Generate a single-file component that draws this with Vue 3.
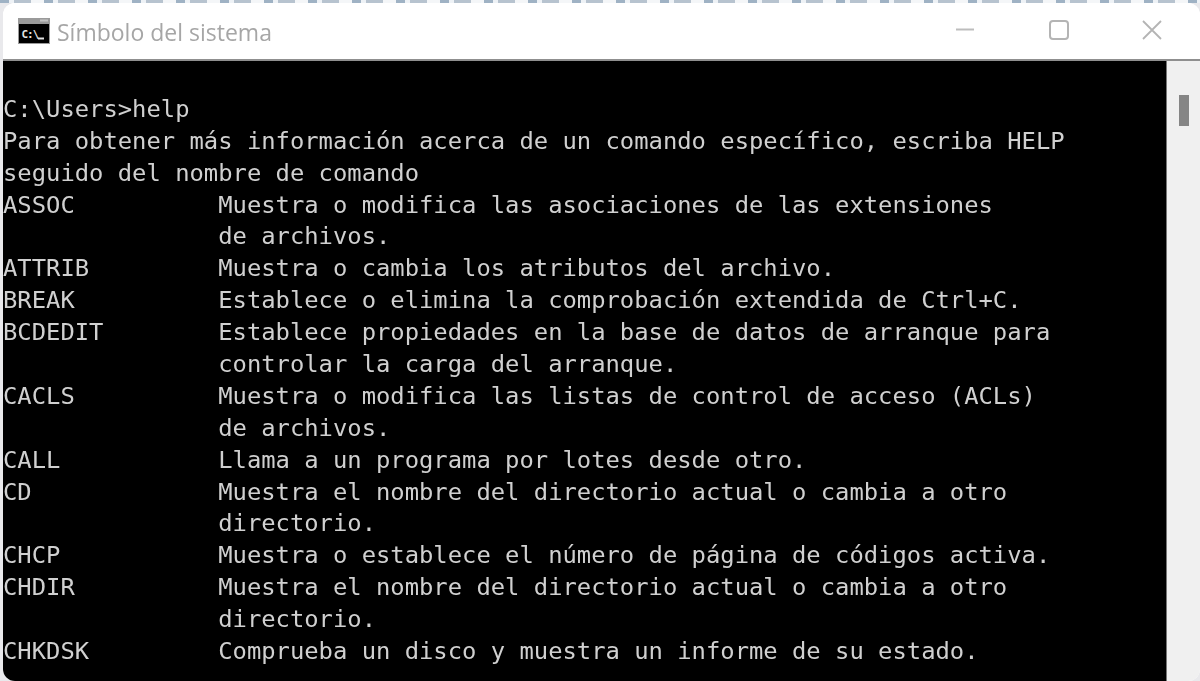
<script setup>
const lines = [
  '',
  'C:\\Users>help',
  'Para obtener más información acerca de un comando específico, escriba HELP',
  'seguido del nombre de comando',
  'ASSOC          Muestra o modifica las asociaciones de las extensiones',
  '               de archivos.',
  'ATTRIB         Muestra o cambia los atributos del archivo.',
  'BREAK          Establece o elimina la comprobación extendida de Ctrl+C.',
  'BCDEDIT        Establece propiedades en la base de datos de arranque para',
  '               controlar la carga del arranque.',
  'CACLS          Muestra o modifica las listas de control de acceso (ACLs)',
  '               de archivos.',
  'CALL           Llama a un programa por lotes desde otro.',
  'CD             Muestra el nombre del directorio actual o cambia a otro',
  '               directorio.',
  'CHCP           Muestra o establece el número de página de códigos activa.',
  'CHDIR          Muestra el nombre del directorio actual o cambia a otro',
  '               directorio.',
  'CHKDSK         Comprueba un disco y muestra un informe de su estado.'
]
</script>

<template>
  <div class="desktop">
    <div class="window">
      <header class="titlebar">
        <div class="title-left">
          <svg class="app-icon" viewBox="0 0 32 26" width="32" height="26">
            <rect x="0" y="0" width="32" height="26" fill="#9a9a9a" />
            <rect x="22" y="1.500" width="8" height="2" fill="#c4c4c4" />
            <rect x="1" y="6" width="30" height="19" fill="#000" />
            <text x="3.500" y="20" class="icon-text">C:\</text>
            <path d="M20 20.500H26" stroke="#e0e0e0" stroke-width="1.800" fill="none" />
          </svg>
          <span class="title">Símbolo del sistema</span>
        </div>
        <div class="controls">
          <svg viewBox="0 0 20 20" width="20" height="20" class="ctl"><path d="M0 9.500H18" stroke="#bdbdbd" stroke-width="1.800" fill="none" /></svg>
          <svg viewBox="0 0 20 20" width="20" height="20" class="ctl"><rect x="1" y="1" width="18" height="18" rx="3" stroke="#b4b4b4" stroke-width="2" fill="none" /></svg>
          <svg viewBox="0 0 20 20" width="20" height="20" class="ctl"><path d="M1 1L19 19M19 1L1 19" stroke="#b4b4b4" stroke-width="1.800" fill="none" /></svg>
        </div>
      </header>
      <div class="body">
        <pre class="console"><div v-for="(l, i) in lines" :key="i" class="line">{{ l }}</div></pre>
        <div class="scrollbar"><div class="thumb"></div></div>
      </div>
    </div>
  </div>
</template>

<style>
html, body { margin: 0; background: #fff; overflow: hidden; }
</style>

<style scoped>
.desktop {
  width: 1200px;
  height: 681px;
  overflow: hidden;
  background:
    repeating-linear-gradient(90deg, #9fb2c4 0 9px, #eef2f6 9px 14px, #b7c3cf 14px 31px, #f4f6f8 31px 44px) 0 0 / 100% 3px no-repeat,
    #e9e9ec;
  padding: 3px 0 0 3px;
  box-sizing: border-box;
}
.window {
  width: 1197px;
  height: 678px;
  border-radius: 12px;
  overflow: hidden;
  display: flex;
  flex-direction: column;
  background: #fff;
}
.titlebar {
  height: 56px;
  flex: none;
  display: flex;
  justify-content: space-between;
  align-items: center;
  background: #fff;
  border-bottom: 2px solid #8f8f8f;
  box-sizing: content-box;
}
.title-left { display: flex; align-items: center; gap: 7px; padding: 2px 0 0 15px; }
.app-icon { display: block; margin-top: -2px; }
.icon-text {
  font-family: "DejaVu Sans Mono", monospace;
  font-size: 11px;
  font-weight: 700;
  letter-spacing: -1px;
  fill: #e4e4e4;
}
.title {
  font-family: "Open Sans", "Noto Sans", sans-serif;
  font-size: 23px;
  color: #a6a6a6;
  filter: blur(0.4px);
}
.controls { display: flex; gap: 73px; padding: 0 38px 0 0; margin-top: -2px; }
.ctl { display: block; }
.body { flex: 1; display: flex; min-height: 0; }
.console {
  flex: 1;
  margin: 0;
  background: #000;
  color: #d0d0d0;
  font-family: "DejaVu Sans Mono", monospace;
  font-size: 23.83px;
  line-height: 31.9px;
  overflow: hidden;
  border-right: 1px solid #777;
  padding-top: 1px;
}
.line { height: 31.9px; white-space: pre; filter: blur(0.45px); }
.scrollbar {
  width: 33px;
  flex: none;
  background: #f0f0f0;
  padding: 34px 0 0 12px;
  box-sizing: border-box;
}
.thumb { width: 10px; height: 31px; background: #858585; }
</style>
